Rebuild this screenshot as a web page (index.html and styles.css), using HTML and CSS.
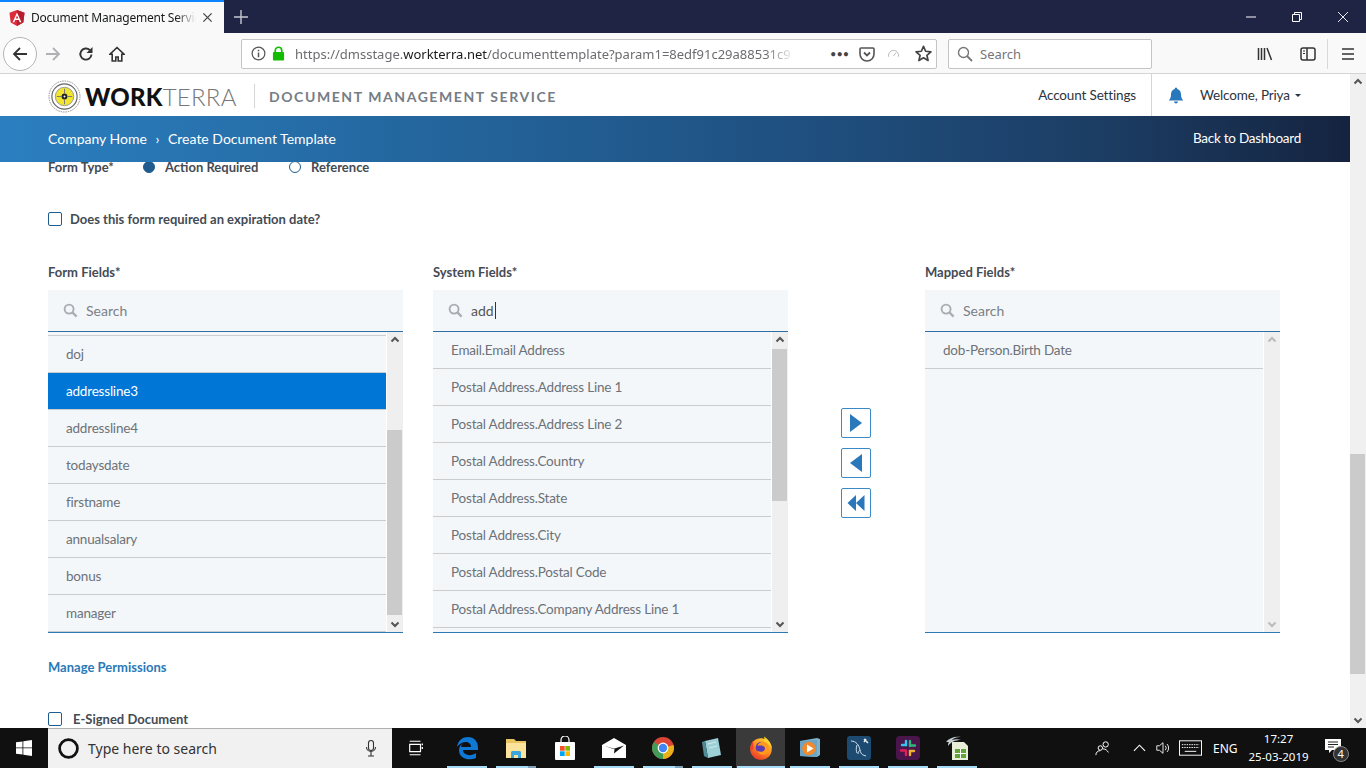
FILE: index.html
```html
<!DOCTYPE html>
<html lang="en">
<head>
    <meta charset="UTF-8">
    <title>Document Management Service</title>
    <link rel="stylesheet" href="styles.css">
</head>
<body>
    <div class="tabstrip">
        <div class="tab">
            <svg class="tab-icon" viewBox="0 0 16 16"><path d="M8 0 .5 2.7l1.2 9.8L8 16l6.3-3.5 1.2-9.8z" fill="#dd2c3a"/><path d="M8 0v16l6.3-3.5 1.2-9.8z" fill="#b71f30"/><path d="M8 2.4 3.6 12.2h1.7l.9-2.2h3.6l.9 2.2h1.7zM6.8 8.6 8 5.6l1.2 3z" fill="#fff"/></svg>
            <span class="tab-title">Document Management Service</span>
            <svg class="tab-close" viewBox="0 0 12 12"><path d="M1.5 1.5l9 9M10.5 1.5l-9 9" stroke="#444" stroke-width="1.4"/></svg>
        </div>
        <svg class="new-tab" viewBox="0 0 14 14"><path d="M7 0v14M0 7h14" stroke="#c8c9d2" stroke-width="1.4"/></svg>
        <div class="window-controls">
            <svg viewBox="0 0 12 12"><path d="M1 6h10" stroke="#fff"/></svg>
            <svg viewBox="0 0 12 12"><path d="M1.5 3.5h7v7h-7zM3.5 3.5v-2h7v7h-2" fill="none" stroke="#fff"/></svg>
            <svg viewBox="0 0 12 12"><path d="M1 1l10 10M11 1 1 11" stroke="#fff" stroke-width=".9"/></svg>
        </div>
    </div>

    <div class="toolbar">
        <div class="nav-back">
            <svg viewBox="0 0 16 16"><path d="M15 8H2M8 2 2 8l6 6" fill="none" stroke="#333" stroke-width="1.8"/></svg>
        </div>
        <svg class="nav-icon forward" viewBox="0 0 16 16"><path d="M1 8h13M8 2l6 6-6 6" fill="none" stroke="#b1b1b3" stroke-width="1.8"/></svg>
        <svg class="nav-icon reload" viewBox="0 0 16 16"><path d="M13.5 8.5A5.6 5.6 0 1 1 11.8 4" fill="none" stroke="#333" stroke-width="1.9"/><path d="M14.5 1v6h-6z" fill="#333"/></svg>
        <svg class="nav-icon home" viewBox="0 0 16 16"><path d="M8 1.5 1 8.2h2.2V15h3.6v-4h2.4v4h3.6V8.2H15z" fill="none" stroke="#333" stroke-width="1.6"/></svg>

        <div class="urlbar">
            <svg class="url-info" viewBox="0 0 16 16"><circle cx="8" cy="8" r="6.8" fill="none" stroke="#555" stroke-width="1.3"/><path d="M8 7v5M8 4v1.6" stroke="#555" stroke-width="1.6"/></svg>
            <svg class="url-lock" viewBox="0 0 14 16"><path d="M3.5 7V4.8a3.5 3.5 0 0 1 7 0V7" fill="none" stroke="#12bc00" stroke-width="1.8"/><rect x="1" y="6.5" width="12" height="9" rx="1" fill="#12bc00"/></svg>
            <div class="url-text">https://dmsstage.<b>workterra.net</b>/documenttemplate?param1=8edf91c29a88531c9</div>
            <div class="url-dots">•••</div>
            <svg class="url-pocket" viewBox="0 0 16 16"><path d="M2 2h12a1 1 0 0 1 1 1v5a7 7 0 0 1-14 0V3a1 1 0 0 1 1-1z" fill="none" stroke="#555" stroke-width="1.6"/><path d="M5 6.5l3 3 3-3" fill="none" stroke="#555" stroke-width="1.8"/></svg>
            <svg class="url-gauge" viewBox="0 0 16 16"><path d="M2 12a6.2 6.2 0 1 1 12 0" fill="none" stroke="#aaa"/><path d="M8 11l3-4" stroke="#aaa"/></svg>
            <svg class="url-star" viewBox="0 0 16 16"><path d="M8 1.3l2 4.6 5 .5-3.800 3.300 1.100 4.900L8 12.100l-4.300 2.500 1.100-4.900L1 6.400l5-.5z" fill="none" stroke="#444" stroke-width="1.6" stroke-linejoin="round"/></svg>
        </div>

        <div class="searchbar">
            <svg viewBox="0 0 16 16"><circle cx="6.5" cy="6.5" r="5" fill="none" stroke="#777" stroke-width="1.4"/><path d="M10 10l5 5" stroke="#777" stroke-width="1.8"/></svg>
            <span>Search</span>
        </div>

        <svg class="tool-icon library" viewBox="0 0 16 16"><path d="M1.5 2v12M4.500 2v12M7.500 2v12M10 2l4.500 12" fill="none" stroke="#333" stroke-width="1.5"/></svg>
        <svg class="tool-icon sidebar" viewBox="0 0 16 16"><rect x="1" y="2" width="14" height="12" rx="2" fill="none" stroke="#333" stroke-width="1.5"/><path d="M7 2v12" stroke="#333" stroke-width="1.5"/><path d="M3 5h2M3 7.500h2" stroke="#333"/></svg>
        <div class="tool-sep"></div>
        <svg class="tool-icon menu" viewBox="0 0 16 16"><path d="M2 3h12M2 8h12M2 13h12" stroke="#333" stroke-width="1.6"/></svg>
    </div>

    <div class="viewport">
        <div class="page">
            <div class="topbar">
                <svg class="logo-mark" viewBox="0 0 34 34">
                    <circle cx="17" cy="17" r="16" fill="#fff" stroke="#888" stroke-dasharray="1.5 1"/>
                    <circle cx="17" cy="17" r="13" fill="#fff" stroke="#666" stroke-width="1.2"/>
                    <circle cx="17" cy="17" r="9.5" fill="#f2e52e" stroke="#999"/>
                    <circle cx="17" cy="17" r="3" fill="#222"/>
                    <circle cx="17" cy="17" r="1" fill="#fff"/>
                    <path d="M9 17h5M20 17h5M17 9v5M17 20v5" stroke="#777"/>
                </svg>
                <div class="logo-text"><b>WORK</b>TERRA</div>
                <div class="logo-divider"></div>
                <div class="app-name">DOCUMENT MANAGEMENT SERVICE</div>
                <div class="account-link">Account Settings</div>
                <div class="user-menu">
                    <svg class="bell" viewBox="0 0 16 16"><path d="M8 0a1.300 1.300 0 0 0-1.200 1.500C4.300 2.100 3 4.200 3 7c0 3-1 4.500-2 5.500V13h14v-.5c-1-1-2-2.500-2-5.500 0-2.800-1.300-4.900-3.800-5.500A1.300 1.300 0 0 0 8 0zM6 14a2 2 0 0 0 4 0z" fill="#2a78bc"/></svg>
                    <span>Welcome, Priya</span>
                    <span class="caret"></span>
                </div>
            </div>

            <div class="crumbs">
                <div class="crumb-trail">Company Home <span class="crumb-sep">›</span> Create Document Template</div>
                <div class="back-link">Back to Dashboard</div>
            </div>

            <div class="content">
                <div class="form-type">
                    <span class="form-label">Form Type*</span>
                    <span class="radio checked"></span>
                    <span class="radio-label">Action Required</span>
                    <span class="radio"></span>
                    <span class="radio-label">Reference</span>
                </div>

                <div class="check-row expiry">
                    <span class="checkbox"></span>
                    <span>Does this form required an expiration date?</span>
                </div>

                <div class="mapping">
                    <div class="field-col">
                        <div class="col-title">Form Fields*</div>
                        <div class="search-box">
                            <svg viewBox="0 0 16 16"><circle cx="6.5" cy="6.5" r="4.8" fill="none" stroke="#a9adb1" stroke-width="2"/><path d="M10 10l4.500 4.500" stroke="#a9adb1" stroke-width="2.4"/></svg>
                            <span class="placeholder">Search</span>
                        </div>
                        <div class="list-box">
                            <div class="list-items scrolled">
                                <div class="list-item">doj</div>
                                <div class="list-item selected">addressline3</div>
                                <div class="list-item">addressline4</div>
                                <div class="list-item">todaysdate</div>
                                <div class="list-item">firstname</div>
                                <div class="list-item">annualsalary</div>
                                <div class="list-item">bonus</div>
                                <div class="list-item">manager</div>
                            </div>
                            <div class="scrollbar">
                                <svg class="arrow" viewBox="0 0 16 16"><path d="M4.500 9.500 8 6l3.500 3.500" fill="none" stroke="#555" stroke-width="2"/></svg>
                                <div class="track"><div class="thumb thumb-form"></div></div>
                                <svg class="arrow" viewBox="0 0 16 16"><path d="M4.500 6.500 8 10l3.500-3.500" fill="none" stroke="#555" stroke-width="2"/></svg>
                            </div>
                        </div>
                    </div>

                    <div class="field-col">
                        <div class="col-title">System Fields*</div>
                        <div class="search-box">
                            <svg viewBox="0 0 16 16"><circle cx="6.5" cy="6.5" r="4.8" fill="none" stroke="#a9adb1" stroke-width="2"/><path d="M10 10l4.500 4.500" stroke="#a9adb1" stroke-width="2.4"/></svg>
                            <span class="typed">add</span>
                        </div>
                        <div class="list-box">
                            <div class="list-items">
                                <div class="list-item">Email.Email Address</div>
                                <div class="list-item">Postal Address.Address Line 1</div>
                                <div class="list-item">Postal Address.Address Line 2</div>
                                <div class="list-item">Postal Address.Country</div>
                                <div class="list-item">Postal Address.State</div>
                                <div class="list-item">Postal Address.City</div>
                                <div class="list-item">Postal Address.Postal Code</div>
                                <div class="list-item">Postal Address.Company Address Line 1</div>
                            </div>
                            <div class="scrollbar">
                                <svg class="arrow" viewBox="0 0 16 16"><path d="M4.500 9.500 8 6l3.500 3.500" fill="none" stroke="#555" stroke-width="2"/></svg>
                                <div class="track"><div class="thumb thumb-system"></div></div>
                                <svg class="arrow" viewBox="0 0 16 16"><path d="M4.500 6.500 8 10l3.500-3.500" fill="none" stroke="#555" stroke-width="2"/></svg>
                            </div>
                        </div>
                    </div>

                    <div class="move-buttons">
                        <div class="move-button"><svg class="move-single" viewBox="0 0 14 20"><path d="M1 1v18l12-9z"/></svg></div>
                        <div class="move-button"><svg class="move-single" viewBox="0 0 14 20"><path d="M13 1v18L1 10z"/></svg></div>
                        <div class="move-button"><svg class="move-double" viewBox="0 0 18 18"><path d="M9 1v16L.5 9zM17.500 1v16L9 9z"/></svg></div>
                    </div>

                    <div class="field-col">
                        <div class="col-title">Mapped Fields*</div>
                        <div class="search-box">
                            <svg viewBox="0 0 16 16"><circle cx="6.5" cy="6.5" r="4.8" fill="none" stroke="#a9adb1" stroke-width="2"/><path d="M10 10l4.500 4.500" stroke="#a9adb1" stroke-width="2.4"/></svg>
                            <span class="placeholder">Search</span>
                        </div>
                        <div class="list-box">
                            <div class="list-items">
                                <div class="list-item">dob-Person.Birth Date</div>
                            </div>
                            <div class="scrollbar">
                                <svg class="arrow" viewBox="0 0 16 16"><path d="M4.500 9.500 8 6l3.500 3.500" fill="none" stroke="#bbb" stroke-width="2"/></svg>
                                <div class="track"></div>
                                <svg class="arrow" viewBox="0 0 16 16"><path d="M4.500 6.500 8 10l3.500-3.500" fill="none" stroke="#bbb" stroke-width="2"/></svg>
                            </div>
                        </div>
                    </div>
                </div>

                <div class="permissions-link">Manage Permissions</div>

                <div class="check-row esigned">
                    <span class="checkbox"></span>
                    <span>E-Signed Document</span>
                </div>
            </div>
        </div>

        <div class="page-scrollbar">
            <svg class="arrow" viewBox="0 0 16 16"><path d="M4.500 9.500 8 6l3.500 3.500" fill="none" stroke="#555" stroke-width="2"/></svg>
            <div class="track"><div class="thumb thumb-page"></div></div>
            <svg class="arrow" viewBox="0 0 16 16"><path d="M4.500 6.500 8 10l3.500-3.500" fill="none" stroke="#555" stroke-width="2"/></svg>
        </div>
    </div>

    <div class="taskbar">
        <div class="start">
            <svg viewBox="0 0 16 16"><path d="M0 2.300 6.500 1.400v6.100H0zM7.300 1.300 16 0v7.500H7.300zM0 8.300h6.500v6.200L0 13.700zM7.300 8.300H16V16l-8.700-1.300z" fill="#fff"/></svg>
        </div>
        <div class="task-search">
            <svg class="cortana" viewBox="0 0 20 20"><circle cx="10" cy="10" r="8.5" fill="none" stroke="#111" stroke-width="2.6"/></svg>
            <span>Type here to search</span>
            <svg class="mic" viewBox="0 0 12 18"><rect x="3.5" y="1" width="5" height="10" rx="2.5" fill="none" stroke="#333" stroke-width="1.1"/><path d="M1.500 7.500a4.500 4.500 0 0 0 9 0M6 12v4M3 16.500h6" fill="none" stroke="#333" stroke-width="1.1"/></svg>
        </div>
        <div class="task-apps">
            <div class="task-app">
                <svg viewBox="0 0 20 20"><path d="M3 2.500h12M3 6h12v8H3zM3 17.500h12" fill="none" stroke="#fff" stroke-width="1.3"/><path d="M17 5v2M17 9v2" stroke="#fff" stroke-width="1.5"/></svg>
            </div>
            <div class="task-app running">
                <svg viewBox="0 0 24 24"><path d="M2 11C3 4 8 1 13 1c6 0 10 4 10 11v2H8c0 5 8 7 13 3v5c-7 3-17 1-17-8 0-3 2-6 5-7-2 1-3 2-3 4h10c0-6-9-7-14 0z" fill="#0f78d4"/></svg>
            </div>
            <div class="task-app running stacked">
                <svg viewBox="0 0 24 24"><path d="M2 3h8l2 2h10v17H2z" fill="#e9c560"/><path d="M2 7h20v15H2z" fill="#fbe39c"/><path d="M7 22v-6l1-1h8l1 1v6h-3v-3h-4v3z" fill="#3ba5dd"/></svg>
            </div>
            <div class="task-app">
                <svg viewBox="0 0 24 24"><path d="M8 7V4a4 4 0 0 1 8 0v3" fill="none" stroke="#fff" stroke-width="1.2"/><rect x="2" y="6" width="20" height="18" rx="1" fill="#fff"/><path d="M7 10h4.700v4.700H7z" fill="#f25022"/><path d="M12.300 10H17v4.700h-4.700z" fill="#7fba00"/><path d="M7 15.300h4.700V20H7z" fill="#00a4ef"/><path d="M12.300 15.300H17V20h-4.700z" fill="#ffb900"/></svg>
            </div>
            <div class="task-app running">
                <svg viewBox="0 0 24 24"><path d="M0 9 12 2l12 7v13H0z" fill="#fff"/><path d="M2 9.500l9 3.500 11-3.500-10 8 .5-4.500z" fill="#111"/></svg>
            </div>
            <div class="task-app running stacked">
                <svg viewBox="0 0 24 24"><circle cx="12" cy="12" r="11" fill="#db4437"/><path d="M12 12 2.500 17.500A11 11 0 0 1 3 6z" fill="#3f9d58"/><path d="M12 12l10.500-3A11 11 0 0 1 12 23z" fill="#e9b317"/><path d="M12 12 12 23a11 11 0 0 1-9.500-5.500z" fill="#3f9d58"/><circle cx="12" cy="12" r="5.4" fill="#fff"/><circle cx="12" cy="12" r="4.2" fill="#4285f4"/></svg>
            </div>
            <div class="task-app running">
                <svg viewBox="0 0 24 24"><path d="M5 5l13-3 3 17-13 3z" fill="#9ccfd6"/><path d="M5 5l3 17-4-2-2-14z" fill="#4f8b96"/><path d="M8 8l8-2M9 12l8-2" stroke="#dfeff1" stroke-width=".8"/></svg>
            </div>
            <div class="task-app active running">
                <svg viewBox="0 0 24 24">
                    <defs><linearGradient id="foxGlow" x1="0.8" y1="0" x2="0.2" y2="1"><stop offset="0" stop-color="#ffd22e"/><stop offset=".5" stop-color="#ff8a1f"/><stop offset="1" stop-color="#e8302d"/></linearGradient></defs>
                    <circle cx="12" cy="13" r="10.800" fill="url(#foxGlow)"/>
                    <path d="M15 .5c4 2.500 7.500 6.500 7.800 12-1.500-3.500-4.500-6-8-6.500 1-1.500 1-3.500.2-5.500z" fill="#ffd22e"/>
                    <path d="M4 5c-2 3-3 6-2.500 9 1 .5 2 0 3-1z" fill="#f0412f"/>
                    <circle cx="12.500" cy="11.500" r="5.800" fill="#5a3bb5"/>
                    <path d="M14.500 5.500c-3 .5-5.500 2-6 4.500 3-1 7.500-.5 7.500 2.500S11.500 17 8 14.500c1.500 4 6 5.500 9.500 3 3-2.500 3-7.500.5-10.500z" fill="#ff9a1f"/>
                </svg>
            </div>
            <div class="task-app running">
                <svg viewBox="0 0 24 24"><path d="M2 5l17-3 3 1v16l-3 2-17-1z" fill="#7eb2cc"/><path d="M2 5l17-1v17L2 20z" fill="#6aa3c4"/><circle cx="11" cy="12.500" r="6.800" fill="#f08a2c"/><path d="M9 8.500v8l6.500-4z" fill="#fff"/></svg>
            </div>
            <div class="task-app running">
                <svg viewBox="0 0 24 24"><rect x="0" y="0" width="24" height="24" rx="3" fill="#1c4a70"/><path d="M4 5c5 0 8 4 9 9s3 5 6 6M10 9c-1 3-1 6 0 8M13 14c-1 1-2 2-2 4" fill="none" stroke="#cfe3ef" stroke-width="1"/><path d="M17 3l4 4M19 3l-2 3" stroke="#e8f0f5" stroke-width="1.4"/></svg>
            </div>
            <div class="task-app running">
                <svg viewBox="0 0 24 24"><rect x="0" y="0" width="24" height="24" rx="4" fill="#4a154b"/><path d="M10 5v4H6" fill="none" stroke="#36c5f0" stroke-width="2.4" stroke-linecap="round"/><path d="M14 10V5M15 9.500h4" fill="none" stroke="#2eb67d" stroke-width="2.4" stroke-linecap="round"/><path d="M14 19v-4h4" fill="none" stroke="#ecb22e" stroke-width="2.4" stroke-linecap="round"/><path d="M5 14.500h5M10 15v4" fill="none" stroke="#e01e5a" stroke-width="2.4" stroke-linecap="round"/></svg>
            </div>
            <div class="task-app running">
                <svg viewBox="0 0 24 24"><path d="M7 6h12l4 4v14H7z" fill="#e8edd8"/><path d="M10 13h11v9H10z" fill="#63a43a"/><path d="M15.500 13v9M10 17.500h11" stroke="#fff"/><path d="M1 6c3-4 9-6 15-5-5 0-7 1-9 3 3-1 6-1 9 0-6 0-10 2-13 6 0-2 0-3 1-4z" fill="#c8ced2"/></svg>
            </div>
        </div>
        <div class="tray">
            <svg class="tray-people" viewBox="0 0 18 18"><circle cx="12" cy="5" r="3" fill="none" stroke="#fff" stroke-width="1.1"/><circle cx="6" cy="9" r="2.5" fill="none" stroke="#fff" stroke-width="1.1"/><path d="M1 17c0-3 2-5 5-5M9 10c3 0 5 2 6 4" fill="none" stroke="#fff" stroke-width="1.1"/></svg>
            <svg class="tray-chevron" viewBox="0 0 14 8"><path d="M1 7l6-6 6 6" fill="none" stroke="#fff" stroke-width="1.2"/></svg>
            <svg class="tray-volume" viewBox="0 0 18 18"><path d="M2 6.500h3L9 3v12l-4-3.500H2z" fill="none" stroke="#fff"/><path d="M11.500 6.500a3.500 3.500 0 0 1 0 5M13.500 4.500a6.500 6.500 0 0 1 0 9" fill="none" stroke="#fff"/></svg>
            <svg class="tray-keyboard" viewBox="0 0 24 16"><rect x=".5" y=".5" width="23" height="15" fill="none" stroke="#fff"/><path d="M3 4.500h18M3 7.500h18" stroke="#fff" stroke-dasharray="1.5 1"/><path d="M6 11.500h12" stroke="#fff"/></svg>
            <span class="tray-lang">ENG</span>
            <div class="tray-clock">
                <span>17:27</span>
                <span>25-03-2019</span>
            </div>
            <div class="tray-notify">
                <svg viewBox="0 0 16 14"><path d="M0 0h16v11H7l-3 3v-3H0z" fill="#fff"/><path d="M3 3h10M3 5.500h10M3 8h6" stroke="#222"/></svg>
                <span class="notify-count">4</span>
            </div>
        </div>
    </div>
</body>
</html>
```

FILE: styles.css
```css
* {
    margin: 0;
    padding: 0;
    box-sizing: border-box;
}

body {
    width: 1366px;
    height: 768px;
    overflow: hidden;
    display: flex;
    flex-direction: column;
    font-family: 'Lato', 'Liberation Sans', sans-serif;
    background: #fff;
}

svg {
    display: block;
    flex-shrink: 0;
}

/* browser tabs */
.tabstrip {
    height: 33px;
    display: flex;
    align-items: center;
    background: #1f2344;
}

.tab {
    width: 224px;
    height: 33px;
    display: flex;
    align-items: center;
    padding-left: 9px;
    background: #f9f9fa;
    border-top: 2px solid #0a84ff;
}

.tab-icon {
    width: 16px;
    height: 16px;
}

.tab-title {
    width: 165px;
    margin-left: 6px;
    overflow: hidden;
    white-space: nowrap;
    font-family: 'Noto Sans', sans-serif;
    font-size: 12px;
    letter-spacing: -0.2px;
    color: #18191a;
    -webkit-mask-image: linear-gradient(90deg, #000 88%, transparent 100%);
    mask-image: linear-gradient(90deg, #000 88%, transparent 100%);
}

.tab-close {
    width: 11px;
    height: 11px;
    margin-left: 6px;
}

.new-tab {
    width: 14px;
    height: 14px;
    margin-left: 10px;
}

.window-controls {
    margin-left: auto;
    display: flex;
    gap: 34px;
    padding-right: 17px;
}

.window-controls svg {
    width: 12px;
    height: 12px;
}

/* browser toolbar */
.toolbar {
    height: 41px;
    display: flex;
    align-items: center;
    padding-top: 1px;
    background: #f9f9fa;
    border-bottom: 1px solid #d4d4d5;
}

.nav-back {
    width: 34px;
    height: 34px;
    margin-left: 3px;
    display: flex;
    align-items: center;
    justify-content: center;
    background: #fff;
    border: 1px solid #b5b5b6;
    border-radius: 50%;
}

.nav-back svg {
    width: 16px;
    height: 16px;
}

.nav-icon {
    width: 16px;
    height: 16px;
}

.forward {
    margin-left: 8px;
}

.reload {
    margin-left: 17px;
}

.home {
    margin-left: 15px;
}

.urlbar {
    width: 696px;
    height: 30px;
    margin-left: 116px;
    display: flex;
    align-items: center;
    background: #fff;
    border: 1px solid #c4c4c5;
    border-radius: 2px;
    padding-left: 9px;
}

.url-info {
    width: 15px;
    height: 15px;
}

.url-lock {
    width: 13px;
    height: 15px;
    margin-left: 6px;
}

.url-text {
    width: 500px;
    margin-left: 10px;
    overflow: hidden;
    white-space: nowrap;
    font-family: 'Noto Sans', sans-serif;
    font-size: 13px;
    color: #6c6c70;
    -webkit-mask-image: linear-gradient(90deg, #000 94%, transparent 100%);
    mask-image: linear-gradient(90deg, #000 94%, transparent 100%);
}

.url-text b {
    font-weight: 400;
    color: #18191a;
}

.url-dots {
    margin-left: 35px;
    font-size: 11px;
    color: #444;
}

.url-pocket {
    width: 16px;
    height: 16px;
    margin-left: 10px;
}

.url-gauge {
    width: 13px;
    height: 13px;
    margin-left: 12px;
}

.url-star {
    width: 17px;
    height: 17px;
    margin-left: 15px;
}

.searchbar {
    width: 204px;
    height: 30px;
    margin-left: 11px;
    display: flex;
    align-items: center;
    gap: 7px;
    padding-left: 8px;
    background: #fff;
    border: 1px solid #c4c4c5;
    border-radius: 2px;
    font-family: 'Noto Sans', sans-serif;
    font-size: 13px;
    color: #75757a;
}

.searchbar svg {
    width: 16px;
    height: 16px;
}

.tool-icon {
    width: 16px;
    height: 16px;
}

.library {
    margin-left: 105px;
}

.sidebar {
    margin-left: 27px;
}

.tool-sep {
    width: 1px;
    height: 30px;
    margin-left: 11px;
    background: #d8d8d9;
}

.menu {
    margin-left: 12px;
}

/* page area */
.viewport {
    height: 654px;
    display: flex;
}

.page {
    width: 1350px;
    display: flex;
    flex-direction: column;
}

.topbar {
    height: 42px;
    display: flex;
    align-items: center;
    padding-left: 48px;
    background: #fff;
}

.logo-mark {
    width: 33px;
    height: 33px;
    margin-top: 3px;
}

.logo-text {
    width: 153px;
    margin-left: 4px;
    margin-top: 2px;
    font-size: 24px;
    letter-spacing: 0.25px;
    font-weight: 300;
    color: #777;
}

.logo-text b {
    font-weight: 900;
    color: #111;
}

.logo-divider {
    width: 1px;
    height: 24px;
    margin-left: 16px;
    margin-top: 2px;
    background: #d5d5d5;
}

.app-name {
    margin-left: 14px;
    margin-top: 2px;
    font-size: 14px;
    font-weight: 700;
    letter-spacing: 1.57px;
    color: #757d85;
}

.account-link {
    margin-left: auto;
    font-size: 13.5px;
    letter-spacing: -0.15px;
    color: #2b3440;
}

.user-menu {
    width: 199px;
    height: 42px;
    margin-left: 15px;
    display: flex;
    align-items: center;
    padding-left: 16px;
    border-left: 1px solid #d5d5d5;
    font-size: 13.5px;
    letter-spacing: -0.15px;
    color: #2b3440;
}

.bell {
    width: 16px;
    height: 17px;
    margin-right: 16px;
}

.caret {
    width: 0;
    height: 0;
    margin-left: 5px;
    border-left: 3px solid transparent;
    border-right: 3px solid transparent;
    border-top: 3px solid #2b3440;
}

.crumbs {
    height: 46px;
    display: flex;
    align-items: center;
    justify-content: space-between;
    padding: 0 49px 2px 48px;
    background: linear-gradient(90deg, #2b7fc0 0%, #24679f 30%, #1f4f7f 60%, #1c3d63 82%, #15233f 100%);
    color: #fff;
    font-size: 14px;
}

.crumb-sep {
    margin: 0 5px;
}

.back-link {
    margin-bottom: 1px;
    font-size: 13.5px;
    letter-spacing: -0.25px;
}

.content {
    flex: 1;
    overflow: hidden;
    padding-left: 48px;
    font-size: 13px;
    color: #444b54;
}

.form-type {
    height: 16px;
    margin-top: -3px;
    display: flex;
    align-items: center;
    font-weight: 700;
    line-height: 16px;
}

.form-label {
    width: 95px;
}

.radio {
    width: 12px;
    height: 12px;
    margin-right: 10px;
    border: 1px solid #1f5c8d;
    border-radius: 50%;
}

.radio.checked {
    background: #1f5c8d;
}

.radio-label {
    width: 124px;
}

.check-row {
    display: flex;
    align-items: center;
    height: 16px;
    font-weight: 700;
}

.expiry {
    margin-top: 36px;
    gap: 8px;
}

.checkbox {
    width: 14px;
    height: 14px;
    border: 1px solid #1f5c8d;
    border-radius: 2px;
}

.mapping {
    margin-top: 37px;
    display: flex;
}

.field-col {
    width: 355px;
}

.field-col + .field-col {
    margin-left: 30px;
}

.col-title {
    height: 16px;
    margin-bottom: 10px;
    font-weight: 700;
    line-height: 16px;
}

.search-box {
    height: 42px;
    display: flex;
    align-items: center;
    gap: 8px;
    padding-left: 15px;
    background: #f4f7fa;
    border-bottom: 1px solid #2d6fa6;
    font-size: 14px;
}

.search-box svg {
    width: 15px;
    height: 15px;
}

.placeholder {
    color: #7b8085;
}

.typed {
    padding-right: 1px;
    border-right: 1px solid #333;
    color: #555;
}

.list-box {
    height: 301px;
    display: flex;
    background: #f4f7fa;
    border-bottom: 1px solid #2a7ab8;
}

.list-items {
    width: 338px;
    overflow: hidden;
}

.list-items.scrolled {
    padding-top: 3px;
}

.list-items.scrolled .list-item:first-child {
    height: 38px;
    border-top: 1px solid #ccc;
}

.list-item {
    height: 37px;
    padding-left: 18px;
    border-bottom: 1px solid #ccc;
    font-size: 13.5px;
    letter-spacing: -0.2px;
    line-height: 36px;
    color: #6d7278;
}

.list-item.selected {
    background: #0076d7;
    color: #fff;
}

.scrollbar {
    width: 17px;
    display: flex;
    flex-direction: column;
    background: #efefef;
    border-left: 1px solid #fff;
}

.arrow {
    width: 16px;
    height: 16px;
}

.track {
    flex: 1;
}

.thumb {
    width: 15px;
    background: #cbcbcb;
}

.thumb-form {
    height: 185px;
    margin-top: 82px;
}

.thumb-system {
    height: 152px;
    margin-top: 1px;
}

.move-buttons {
    width: 137px;
    display: flex;
    flex-direction: column;
    align-items: center;
    gap: 10px;
    padding: 144px 1px 0 0;
}

.move-buttons + .field-col {
    margin-left: 0;
}

.move-button {
    width: 30px;
    height: 30px;
    display: flex;
    align-items: center;
    justify-content: center;
    background: #fff;
    border: 1px solid #3b8ac8;
    border-radius: 2px;
}

.move-button svg {
    fill: #2a78bc;
}

.move-single {
    width: 14px;
    height: 20px;
}

.move-double {
    width: 18px;
    height: 18px;
}

.permissions-link {
    margin-top: 26px;
    font-weight: 700;
    line-height: 16px;
    color: #2a7ab8;
}

.esigned {
    margin-top: 36px;
    gap: 11px;
}

.page-scrollbar {
    width: 16px;
    display: flex;
    flex-direction: column;
    background: #f0f0f0;
}

.thumb-page {
    height: 220px;
    margin-top: 364px;
}

/* windows taskbar */
.taskbar {
    height: 40px;
    display: flex;
    background: #101010;
}

.start {
    width: 48px;
    display: flex;
    align-items: center;
    justify-content: center;
}

.start svg {
    width: 16px;
    height: 16px;
}

.task-search {
    width: 344px;
    display: flex;
    align-items: center;
    padding-left: 10px;
    background: #f1f1f1;
    border-top: 1px solid #b0b0b0;
    font-family: 'Noto Sans', sans-serif;
    font-size: 14px;
    color: #333;
}

.cortana {
    width: 21px;
    height: 21px;
    margin-right: 9px;
}

.mic {
    width: 12px;
    height: 19px;
    margin-left: auto;
    margin-right: 15px;
}

.task-apps {
    display: flex;
    margin-left: 1px;
}

.task-app {
    width: 49px;
    display: flex;
    align-items: center;
    justify-content: center;
    position: relative;
}

.task-app svg {
    width: 24px;
    height: 24px;
}

.task-app:first-child svg {
    width: 18px;
    height: 18px;
    margin-right: 3px;
}

.task-app.active {
    background: #3a3a3a;
}

.task-app.running::after {
    content: '';
    position: absolute;
    left: 5px;
    right: 4px;
    bottom: 0;
    height: 2px;
    background: #a6dcf8;
}

.task-app.stacked::after {
    background: linear-gradient(90deg, #a6dcf8 80%, #7fa3b8 80%);
}

.task-app.active::after {
    left: 1px;
    right: 0;
}

.tray {
    flex: 1;
    display: flex;
    align-items: center;
    padding-left: 114px;
    font-family: 'Noto Sans', sans-serif;
    font-size: 12px;
    color: #fff;
}

.tray-people {
    width: 16px;
    height: 16px;
}

.tray-chevron {
    width: 13px;
    height: 8px;
    margin-left: 22px;
}

.tray-volume {
    width: 16px;
    height: 16px;
    margin-left: 9px;
}

.tray-keyboard {
    width: 23px;
    height: 16px;
    margin-left: 8px;
}

.tray-lang {
    margin-left: 11px;
}

.tray-clock {
    width: 70px;
    margin-left: 6px;
    display: flex;
    flex-direction: column;
    align-items: center;
    font-size: 11.5px;
    line-height: 18px;
}

.tray-notify {
    margin-left: 11px;
    margin-bottom: 4px;
    position: relative;
}

.tray-notify svg {
    width: 16px;
    height: 14px;
}

.notify-count {
    position: absolute;
    left: 8px;
    top: 7px;
    width: 16px;
    height: 16px;
    border: 1px solid #888;
    border-radius: 50%;
    background: #333;
    font-size: 11px;
    line-height: 14px;
    text-align: center;
}
```
